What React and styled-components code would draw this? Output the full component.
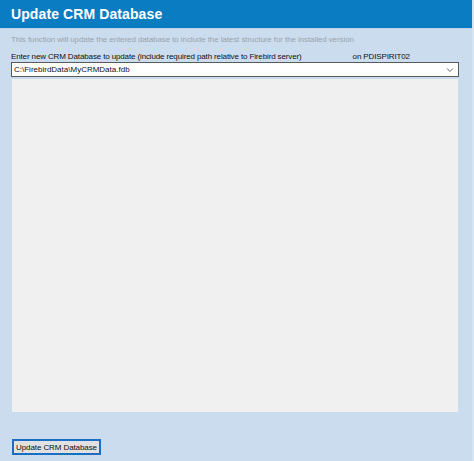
import React from "react";
import styled, { createGlobalStyle } from "styled-components";

const GlobalStyle = createGlobalStyle`
  html, body {
    margin: 0;
    padding: 0;
    height: 100%;
    background: #cbdcee;
  }
  #root {
    height: 100%;
  }
`;

const Window = styled.div`
  height: 461px;
  width: 474px;
  display: flex;
  flex-direction: column;
  background: #cbdcee;
  font-family: "Liberation Sans", Arial, sans-serif;
  box-sizing: border-box;
  border-right: 2px solid #d6e5f3;
`;

const Header = styled.div`
  height: 29px;
  flex-shrink: 0;
  background: #0a7dc2;
  border-bottom: 1px solid #bcd6ee;
  box-sizing: border-box;
  display: flex;
  align-items: center;
  padding-left: 11px;

  h1 {
    margin: 0;
    color: #fff;
    font-size: 14px;
    font-weight: bold;
    letter-spacing: 0.1px;
  }
`;

const Body = styled.div`
  flex: 1;
  display: flex;
  flex-direction: column;
  padding: 5px 13px 6px 11px;
`;

const Note = styled.p`
  margin: 0;
  height: 12px;
  line-height: 12px;
  font-size: 8px;
  letter-spacing: -0.09px;
  color: #9aa3ad;
`;

const LabelRow = styled.div`
  display: flex;
  margin-top: 5px;
  height: 11px;
  line-height: 11px;
  font-size: 8px;
  letter-spacing: -0.13px;
  color: #111;

  span:last-child {
    margin-left: 51px;
  }
`;

const Combo = styled.div`
  height: 15px;
  box-sizing: border-box;
  background: #fff;
  border: 1px solid #5a5a5a;
  display: flex;
  align-items: center;
  justify-content: space-between;
  padding: 0 4px 0 2px;
  font-size: 8px;
  color: #111;

  svg {
    width: 8px;
    height: 8px;
  }
`;

const Panel = styled.div`
  margin: 2px 1px 0 1px;
  flex: 1;
  max-height: 333px;
  background: #f0f0f0;
`;

const Footer = styled.div`
  margin-top: auto;
  padding-left: 1px;
`;

const Button = styled.button`
  height: 16px;
  width: 89px;
  padding: 0;
  box-sizing: border-box;
  background: #e1e1e1;
  border: 2px solid #1a6fc4;
  font-family: "Liberation Sans", Arial, sans-serif;
  font-size: 8px;
  letter-spacing: -0.1px;
  color: #111;
  display: block;
`;

export default function App() {
  return (
    <>
      <GlobalStyle />
      <Window>
        <Header>
          <h1>Update CRM Database</h1>
        </Header>
        <Body>
          <Note>
            This function will update the entered database to include the latest structure for the installed version
          </Note>
          <LabelRow>
            <span>Enter new CRM Database to update (include required path relative to Firebird server)</span>
            <span>on PDISPIRIT02</span>
          </LabelRow>
          <Combo>
            <span>C:\FirebirdData\MyCRMData.fdb</span>
            <svg viewBox="0 0 8 8" fill="none" stroke="#666" strokeWidth="1">
              <path d="M1 2.5 L4 5.5 L7 2.5" />
            </svg>
          </Combo>
          <Panel />
          <Footer>
            <Button>Update CRM Database</Button>
          </Footer>
        </Body>
      </Window>
    </>
  );
}
